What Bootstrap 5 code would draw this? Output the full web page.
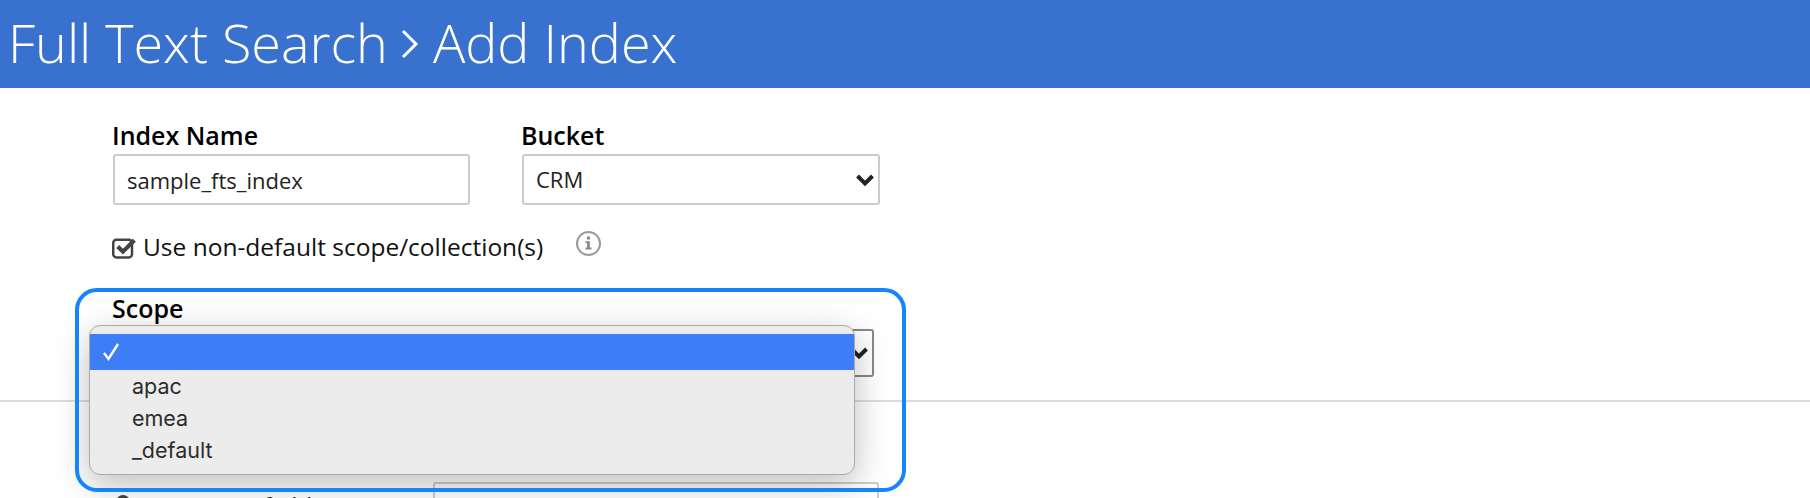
<!DOCTYPE html>
<html lang="en">
<head>
<meta charset="utf-8">
<title>Add Index</title>
<link rel="stylesheet" href="https://cdn.jsdelivr.net/npm/bootstrap@5.3.0/dist/css/bootstrap.min.css">
<style>
html, body { height: 498px; overflow: hidden; background: #fff; }
body { font-family: "Open Sans", sans-serif; color: #111; position: relative; }
.fts-head { height: 88px; background: #3871ce; color: #fff; font-weight: 300; font-size: 53.9px; line-height: 82px; padding: 0 0 4px 8px; white-space: nowrap; display: flex; align-items: center; }
.fts-crumb { width: 19px; height: 32px; margin: 4px 14px 0 12px; flex: none; }
.fts-body { padding: 30px 0 0 113px; }
.fts-label { display: block; font-weight: 600; font-size: 25px; line-height: 34px; margin: 0 0 2px -1px; color: #000; }
.fts-input.form-control, .fts-select.form-select { height: 51px; width: 357px; border: 2px solid #ccc; border-radius: 3px; font-size: 22px; padding: 0 12px; color: #222; background-color: #fff; box-shadow: none; font-family: "Open Sans", sans-serif; }
.fts-select.form-select { background-image: none; width: 358px; }
.fts-field { width: 358px; margin-left: 52px; }
.fts-chev { position: absolute; right: 5px; top: 18px; width: 20px; height: 16px; pointer-events: none; }
.fts-check { margin-top: 27px; font-size: 24.5px; line-height: 30px; height: 30px; color: #111; }
.fts-box { width: 25px; height: 23px; margin: 0 6px 0 -1px; flex: none; }
.fts-info { width: 27px; height: 27px; margin: -8px 0 0 32px; flex: none; }
.fts-scope { margin-top: 29px; position: relative; width: 761px; }
.fts-scope .fts-label { margin-bottom: 4px; }
.fts-select-open.form-select { width: 761px; height: 48px; border-color: #888; background-color: #fff; }
.fts-scope .fts-chev { top: 16px; }
.fts-rule { border: 0; height: 2px; background: #ddd; opacity: 1; margin: 23px 0 0 0; }
.fts-radio-row { margin: 80px 0 0 116px; height: 51px; font-size: 24.5px; line-height: 34px; color: #111; }
.fts-ring { width: 14px; height: 14px; border: 3px solid #444; border-radius: 50%; margin: 13px 13px 0 0; flex: none; }
.fts-radio-text { margin-top: 7px; }
.fts-type-input { position: absolute; left: 433px; width: 446px; height: 51px; border: 2px solid #ccc; border-radius: 3px; background: #fff; }
.fts-menu { position: absolute; left: 89px; top: 325px; width: 766px; height: 150px; background: #ececec; border: 1px solid #aaa; border-radius: 11px; box-shadow: 0 10px 34px rgba(0,0,0,.26); font-family: Inter, "Liberation Sans", sans-serif; font-size: 21.5px; color: #2c2c2c; padding: 8px 0; list-style: none; margin: 0; z-index: 5; }
.fts-menu li { height: 32px; line-height: 32px; padding-left: 42px; }
.fts-menu li.fts-current { height: 36px; background: #3d7ef7; position: relative; }
.fts-tick { position: absolute; left: 11px; top: 7px; width: 20px; height: 22px; }
.fts-outline { position: absolute; left: 75px; top: 288px; width: 831px; height: 204px; border: 4px solid #1585ff; border-radius: 22px; z-index: 6; pointer-events: none; }
</style>
</head>
<body>
<header class="fts-head"><span>Full Text Search</span><svg class="fts-crumb" viewBox="0 0 19 32"><path d="M3 3 16 16 3 29" fill="none" stroke="#fff" stroke-width="3"/></svg><span>Add Index</span></header>
<main class="fts-body">
  <div class="d-flex">
    <div>
      <label class="fts-label" for="idx">Index Name</label>
      <input id="idx" class="form-control fts-input" value="sample_fts_index">
    </div>
    <div class="fts-field">
      <label class="fts-label" for="bkt">Bucket</label>
      <div class="position-relative">
        <select id="bkt" class="form-select fts-select"><option>CRM</option></select>
        <svg class="fts-chev" viewBox="0 0 20 16"><path d="M2.5 4 10 11.5 17.5 4" fill="none" stroke="#222" stroke-width="4"/></svg>
      </div>
    </div>
  </div>
  <div class="d-flex align-items-center fts-check">
    <svg class="fts-box" viewBox="0 0 24 22"><rect x="1.2" y="3.5" width="18" height="17" rx="3" fill="none" stroke="#444" stroke-width="2.4"/><path d="M5.5 10 10.5 15 21.5 4" fill="none" stroke="#444" stroke-width="4"/></svg>
    <span>Use non-default scope/collection(s)</span>
    <svg class="fts-info" viewBox="0 0 27 27"><circle cx="13.5" cy="13.5" r="11.5" fill="none" stroke="#999" stroke-width="2"/><rect x="12" y="6.5" width="3" height="3" fill="#888"/><path d="M10.5 11.2h4.3v6.4h1.7v1.9h-6v-1.9h1.6v-4.5h-1.6z" fill="#888"/></svg>
  </div>
  <div class="fts-scope">
    <label class="fts-label" for="scp">Scope</label>
    <div class="position-relative">
      <select id="scp" class="form-select fts-select fts-select-open"><option></option></select>
      <svg class="fts-chev" viewBox="0 0 20 16"><path d="M2.5 4 10 11.5 17.5 4" fill="none" stroke="#222" stroke-width="4"/></svg>
    </div>
  </div>
</main>
<hr class="fts-rule">
<div class="d-flex align-items-start fts-radio-row">
  <span class="fts-ring"></span><span class="fts-radio-text">JSON type field:</span>
  <span class="fts-type-input"></span>
</div>
<ul class="fts-menu">
  <li class="fts-current"><svg class="fts-tick" viewBox="0 0 20 22"><path d="M3 12 7.5 18 17 3" fill="none" stroke="#fff" stroke-width="2.4"/></svg></li>
  <li>apac</li>
  <li>emea</li>
  <li>_default</li>
</ul>
<div class="fts-outline"></div>
</body>
</html>
